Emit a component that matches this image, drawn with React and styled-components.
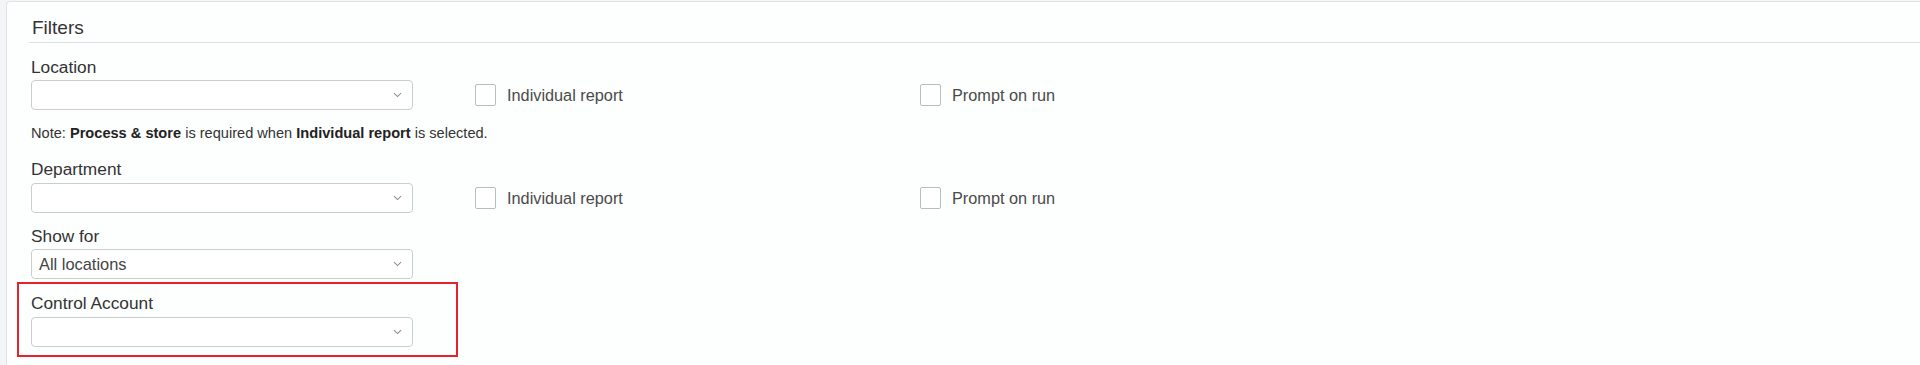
import React from "react";
import styled, { createGlobalStyle } from "styled-components";

const Global = createGlobalStyle`
  html, body { margin: 0; padding: 0; }
  body {
    background: #f3f5f6;
    font-family: Arial, "Liberation Sans", Helvetica, sans-serif;
    color: #333;
    overflow: hidden;
    width: 1920px;
    height: 365px;
  }
`;

const Page = styled.div`
  padding: 1px 0 0 6px;
  height: 364px;
  overflow: hidden;
`;

const Panel = styled.section`
  width: calc(100% + 10px);
  height: 400px;
  box-sizing: border-box;
  background: #fdfefe;
  border: 1px solid #dfe3e6;
  border-radius: 4px;
  padding: 15px 0 0 24px;
`;

const Heading = styled.h2`
  margin: 0 0 0 -2px;
  padding: 0 0 3px 3px;
  font-size: 19px;
  line-height: 22px;
  font-weight: normal;
  color: #333;
  border-bottom: 1px solid #dcdfe1;
`;

const Body = styled.div`
  padding-top: 14px;
  display: flex;
  flex-direction: column;
`;

const Group = styled.div`
  display: flex;
  flex-direction: column;
  margin-top: ${(p) => p.$mt || 0}px;
`;

const Label = styled.label`
  font-size: 17.3px;
  line-height: 20px;
  color: #333;
  margin-bottom: ${(p) => p.$mb ?? 3}px;
`;

const Row = styled.div`
  display: flex;
  align-items: center;
`;

const SelectBox = styled.div`
  width: 382px;
  height: 30px;
  box-sizing: border-box;
  border: 1px solid #c9cdd0;
  border-radius: 4px;
  background: #fff;
  display: flex;
  align-items: center;
  justify-content: space-between;
  padding: 0 10px 0 7px;
  font-size: 16.4px;
  color: #444;
`;

const Chevron = () => (
  <svg width="9" height="6" viewBox="0 0 9 6" fill="none">
    <path d="M1 1.2 L4.5 4.6 L8 1.2" stroke="#8a8f93" strokeWidth="1.1" />
  </svg>
);

const Select = ({ value }) => (
  <SelectBox>
    <span>{value}</span>
    <Chevron />
  </SelectBox>
);

const CheckItem = styled.div`
  display: flex;
  align-items: center;
  width: ${(p) => p.$w}px;
  margin-left: ${(p) => p.$ml || 0}px;
  font-size: 16.3px;
  color: #4a4a4a;
`;

const Box = styled.span`
  width: 21px;
  height: 22px;
  box-sizing: border-box;
  border: 1px solid #b9bdc0;
  border-radius: 2px;
  background: #fff;
  margin-right: 11px;
  flex: none;
`;

const Note = styled.p`
  margin: 15px 0 0;
  font-size: 14.6px;
  line-height: 17px;
  color: #333;
  b { font-weight: bold; color: #222; }
`;

const Highlight = styled.div`
  width: 441px;
  height: 75px;
  box-sizing: border-box;
  margin: 3px 0 0 -14px;
  border: 2px solid #e8222b;
  padding: 9px 0 0 12px;
  display: flex;
  flex-direction: column;
`;

const Checks = () => (
  <>
    <CheckItem $ml={62} $w={445}>
      <Box />
      Individual report
    </CheckItem>
    <CheckItem $w={240}>
      <Box />
      Prompt on run
    </CheckItem>
  </>
);

export default function App() {
  return (
    <>
      <Global />
      <Page>
        <Panel>
          <Heading>Filters</Heading>
          <Body>
            <Group>
              <Label>Location</Label>
              <Row>
                <Select />
                <Checks />
              </Row>
            </Group>
            <Note>
              Note: <b>Process &amp; store</b> is required when <b>Individual report</b> is selected.
            </Note>
            <Group $mt={17}>
              <Label $mb={4}>Department</Label>
              <Row>
                <Select />
                <Checks />
              </Row>
            </Group>
            <Group $mt={13}>
              <Label $mb={3}>Show for</Label>
              <Row>
                <Select value="All locations" />
              </Row>
            </Group>
            <Highlight>
              <Label $mb={4}>Control Account</Label>
              <Row>
                <Select />
              </Row>
            </Highlight>
          </Body>
        </Panel>
      </Page>
    </>
  );
}
